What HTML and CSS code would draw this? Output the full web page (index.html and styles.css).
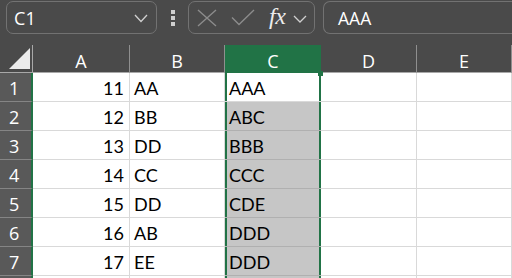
FILE: index.html
```html
<!DOCTYPE html>
<html>
<head>
<meta charset="utf-8">
<link rel="stylesheet" href="styles.css">
</head>
<body>
<div class="app">
  <div class="bar">
    <div class="namebox">
      <span class="name">C1</span>
      <svg class="chev" width="14" height="9" viewBox="0 0 14 9"><path d="M1 1 L7 7.5 L13 1" fill="none" stroke="#d0d0d0" stroke-width="1.3"/></svg>
    </div>
    <div class="dots"><i></i><i></i><i></i></div>
    <div class="fxbox">
      <svg class="ico" width="20" height="18" viewBox="0 0 20 18"><path d="M1 1 L19 17 M19 1 L1 17" stroke="#8c8c8c" stroke-width="1.4" fill="none"/></svg>
      <svg class="ico check" width="24" height="17" viewBox="0 0 24 17"><path d="M1 8.5 L8 15.5 L23 1" stroke="#8c8c8c" stroke-width="1.4" fill="none"/></svg>
      <span class="fx">fx</span>
      <svg class="chev2" width="14" height="8" viewBox="0 0 14 8"><path d="M1 1 L7 7 L13 1" fill="none" stroke="#cfcfcf" stroke-width="1.3"/></svg>
    </div>
    <div class="input"><span>AAA</span></div>
  </div>
  <div class="sheet">
    <div class="corner"><svg width="22" height="22" viewBox="0 0 22 22"><polygon points="0,21 21,21 21,0" fill="#ececec"/></svg></div>
    <div class="ch">A</div>
    <div class="ch">B</div>
    <div class="ch sel">C<span class="handle"></span></div>
    <div class="ch">D</div>
    <div class="ch">E</div>

    <div class="rh">1</div><div class="c num">11</div><div class="c">AA</div><div class="c selc active">AAA</div><div class="c"></div><div class="c"></div>
    <div class="rh">2</div><div class="c num">12</div><div class="c">BB</div><div class="c selc hl">ABC</div><div class="c"></div><div class="c"></div>
    <div class="rh">3</div><div class="c num">13</div><div class="c">DD</div><div class="c selc hl">BBB</div><div class="c"></div><div class="c"></div>
    <div class="rh">4</div><div class="c num">14</div><div class="c">CC</div><div class="c selc hl">CCC</div><div class="c"></div><div class="c"></div>
    <div class="rh">5</div><div class="c num">15</div><div class="c">DD</div><div class="c selc hl">CDE</div><div class="c"></div><div class="c"></div>
    <div class="rh">6</div><div class="c num">16</div><div class="c">AB</div><div class="c selc hl">DDD</div><div class="c"></div><div class="c"></div>
    <div class="rh">7</div><div class="c num">17</div><div class="c">EE</div><div class="c selc hl">DDD</div><div class="c"></div><div class="c"></div>
    <div class="rh"></div><div class="c"></div><div class="c"></div><div class="c selc hl"></div><div class="c"></div><div class="c"></div>
  </div>
</div>
</body>
</html>
```
FILE: styles.css
```css
* { box-sizing: border-box; }
html, body { margin: 0; padding: 0; }
body { width: 512px; height: 278px; overflow: hidden; background: #4a4a4a; }
.app { width: 512px; height: 278px; overflow: hidden; font-family: "Open Sans", "Noto Sans", sans-serif; }

.bar {
  height: 45px;
  display: flex;
  align-items: flex-start;
  padding-top: 1px;
  background: #4a4a4a;
}
.namebox {
  margin-left: 6px;
  width: 151px;
  height: 33px;
  border: 1px solid #727272;
  border-radius: 7px;
  display: flex;
  align-items: center;
  justify-content: space-between;
  padding: 0 8px 0 7px;
}
.name { color: #ffffff; font-size: 18px; letter-spacing: 0.2px; }
.chev { margin-top: 1px; }
.dots {
  margin-left: 14px;
  margin-top: 9px;
  width: 4px;
  display: flex;
  flex-direction: column;
  gap: 2px;
}
.dots i { display: block; width: 4px; height: 4px; background: #cfcfcf; }
.fxbox {
  margin-left: 13px;
  width: 127px;
  height: 33px;
  border: 1px solid #727272;
  border-radius: 7px;
  display: flex;
  align-items: center;
  padding-left: 8px;
}
.check { margin-left: 14px; }
.fx {
  margin-left: 14px;
  font-family: "Liberation Serif", "DejaVu Serif", serif;
  font-style: italic;
  font-size: 24px;
  color: #ececec;
  line-height: 1;
  margin-top: -3px;
  letter-spacing: -0.5px;
}
.chev2 { margin-left: 8px; margin-top: 2px; }
.input {
  margin-left: 8px;
  flex: 1;
  height: 33px;
  border: 1px solid #727272;
  border-right: none;
  border-radius: 7px 0 0 7px;
  display: flex;
  align-items: center;
  padding-left: 14px;
}
.input span { color: #ffffff; font-size: 17.5px; }

.sheet {
  display: grid;
  grid-template-columns: 33px 97px 95px 96px 96px 1fr;
  grid-template-rows: 28px repeat(8, 29px);
  background: #ffffff;
}
.corner {
  background: #4a4a4a;
  border-bottom: 1px solid #a8a8a8;
  border-right: 1px solid #a8a8a8;
  display: flex;
  align-items: flex-start;
  padding: 3px 0 0 9px;
}
.ch {
  position: relative;
  background: #4a4a4a;
  color: #ffffff;
  font-size: 18px;
  line-height: 1;
  display: flex;
  align-items: center;
  justify-content: center;
  border-right: 1px solid #8f8f8f;
  border-bottom: 1px solid #a8a8a8;
  padding-top: 4px;
}
.ch.sel { background: #217346; border-bottom-color: #217346; border-right: none; }
.handle {
  position: absolute;
  right: -2px;
  bottom: -4px;
  width: 5px;
  height: 5px;
  background: #217346;
  z-index: 3;
}
.rh {
  background: #595959;
  color: #ffffff;
  font-size: 18px;
  line-height: 1;
  display: flex;
  align-items: center;
  padding-left: 9px;
  padding-top: 2px;
  border-bottom: 1px solid #858585;
  border-right: 2px solid #217346;
}
.c {
  background: #ffffff;
  border-right: 1px solid #d9d9d9;
  border-bottom: 1px solid #d9d9d9;
  font-family: "Lato", "Liberation Sans", sans-serif;
  font-size: 18px;
  color: #000000;
  display: flex;
  align-items: flex-end;
  padding: 0 4px 4px 4px;
  line-height: 1;
}
.c.num { justify-content: flex-end; padding-right: 5px; }
.c.selc {
  border-right: none;
  box-shadow: inset 2px 0 0 #217346, inset -2px 0 0 #217346;
  padding-left: 4px;
}
.c.hl { background: #c6c6c6; border-bottom-color: #b0b0b0; }
```
